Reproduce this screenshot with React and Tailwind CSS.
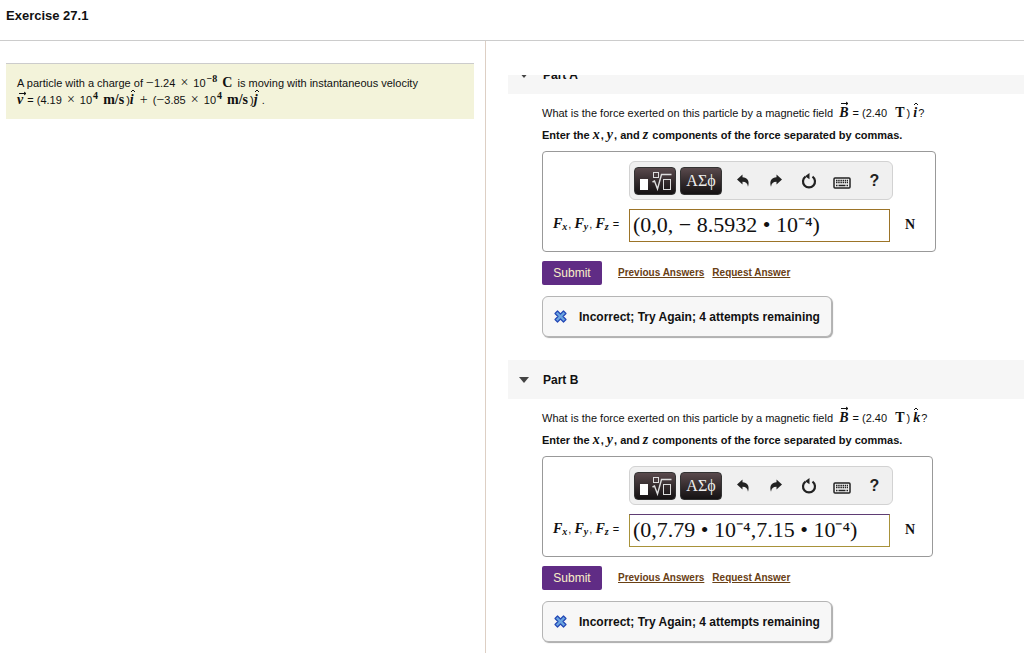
import React, { useState } from 'react';

const parts = [
  {
    id: 'a',
    title: 'Part A',
    unit: 'i',
    answer: '(0,0, − 8.5932 • 10⁻⁴)',
    boxClass: 'w-[394px]',
    inputClass: 'border-[#9c7428]',
  },
  {
    id: 'b',
    title: 'Part B',
    unit: 'k',
    answer: '(0,7.79 • 10⁻⁴,7.15 • 10⁻⁴)',
    boxClass: 'w-[391px]',
    inputClass: 'border-[#a8923a] border-t-[#5f3d74]',
  },
];

function Var({ children }) {
  return <i className="mr-px font-['Liberation_Serif',serif] text-sm leading-none font-bold">{children}</i>;
}

function Upright({ children }) {
  return <span className="mx-0.5 font-['Liberation_Serif',serif] text-sm leading-none font-bold">{children}</span>;
}

function Op({ children }) {
  return <span className="mx-0.5 font-['Liberation_Serif',serif] text-sm leading-none">{children}</span>;
}

function Minus() {
  return <span className="font-['Liberation_Serif',serif] text-sm leading-none">−</span>;
}

function Vec({ children }) {
  return (
    <span className="relative inline-block leading-none">
      <svg className={`absolute left-0.5 ${children === 'v' ? '-top-0.5' : '-top-[5px]'}`} width="8" height="5" viewBox="0 0 8 5" fill="none" stroke="#111">
        <path d="M0 2.500h7M5 1l2 1.500-2 1.500" />
      </svg>
      <Var>{children}</Var>
    </span>
  );
}

function Hat({ children }) {
  return (
    <span className="relative inline-block leading-none">
      <svg className="absolute -top-1 left-0" width="6" height="4" viewBox="0 0 6 4" fill="none" stroke="#111">
        <path d="M1 3l2-2 2 2" />
      </svg>
      <Var>{children}</Var>
    </span>
  );
}

function Sup({ children }) {
  return <sup className="ml-px font-['Liberation_Serif',serif] text-[10px] leading-none font-bold">{children}</sup>;
}

function Sub({ children }) {
  return <sub className="text-[10px] leading-none">{children}</sub>;
}

function RootIcon() {
  return (
    <svg width="34" height="22" viewBox="0 0 34 22" fill="none" stroke="#ddd" strokeWidth="1">
      <rect x="2" y="9" width="8" height="11" fill="#fff" stroke="none" />
      <rect x="15.500" y="2.500" width="5" height="5" />
      <path d="M14.500 12l2-1 3 8 4-14.500h10" strokeWidth="1.400" />
      <rect x="25.500" y="9.500" width="7" height="10" />
    </svg>
  );
}

function UndoIcon() {
  return (
    <svg width="14" height="14" viewBox="0 0 14 14" fill="#222">
      <path d="M1 5.500L6.500 0.500V3.200C11 3.400 14 6.500 12 12.800C11.500 9.500 10 7.900 6.500 7.800V10.500Z" />
    </svg>
  );
}

function RedoIcon() {
  return (
    <svg width="14" height="14" viewBox="0 0 14 14" fill="#222">
      <path d="M13 5.500L7.500 0.500V3.200C3 3.400 0 6.500 2 12.800C2.500 9.500 4 7.900 7.500 7.800V10.500Z" />
    </svg>
  );
}

function ResetIcon() {
  return (
    <svg width="16" height="16" viewBox="0 0 16 16" fill="none">
      <path d="M4.500 3.600A6 6 0 1 0 11.500 3.600" stroke="#222" strokeWidth="2.200" />
      <path d="M4 3.300L8.500 0V6.200z" fill="#222" />
    </svg>
  );
}

function KeyboardIcon() {
  return (
    <svg className="mt-1" width="18" height="12" viewBox="0 0 18 12" fill="none" stroke="#222">
      <rect x="1" y="1" width="16" height="10" rx="1" strokeWidth="1.500" />
      <path d="M3 3.500h12M3 5.500h12" strokeWidth="1.500" strokeDasharray="1.500 0.700" />
      <path d="M3 8.500h1.500M5.500 8.500h7M13.500 8.500H15" strokeWidth="1.500" />
    </svg>
  );
}

function WrongIcon() {
  return (
    <svg width="13" height="13" viewBox="0 0 13 13">
      <path
        d="M3.500 1L6.500 4L9.500 1L12 3.500L9 6.500L12 9.500L9.500 12L6.500 9L3.500 12L1 9.500L4 6.500L1 3.500Z"
        fill="#6ba5e0"
        stroke="#2347b5"
        strokeWidth="1.200"
        strokeLinejoin="round"
      />
    </svg>
  );
}

function Toolbar() {
  const dark = 'flex h-7 w-[42px] shrink-0 items-center justify-center rounded border border-[#333] bg-linear-to-b from-[#5a4a4d] to-[#151213] text-[#eee]';
  const plain = 'flex h-7 w-[33px] items-center justify-center text-[#222]';

  return (
    <div className="flex h-[39px] items-center rounded-md border border-[#d2d2d2] bg-[#f0f0f0] pl-1">
      <button className={dark} aria-label="Templates"><RootIcon /></button>
      <button className={`${dark} mx-1 font-['Liberation_Serif',serif] text-base`}>ΑΣϕ</button>
      <button className={plain} aria-label="Undo"><UndoIcon /></button>
      <button className={plain} aria-label="Redo"><RedoIcon /></button>
      <button className={plain} aria-label="Reset"><ResetIcon /></button>
      <button className={plain} aria-label="Keyboard"><KeyboardIcon /></button>
      <button className={`${plain} text-base font-bold`}>?</button>
    </div>
  );
}

function Part({ part }) {
  const [answer, setAnswer] = useState(part.answer);

  return (
    <section className="mb-[23px]">
      <h2 className="flex h-[39px] items-center bg-[#f6f6f6] text-xs font-bold">
        <button className="flex items-center gap-[14px] pl-[11px]">
          <svg width="10" height="6" viewBox="0 0 10 6"><path d="M0 0h10L5 6z" fill="#444" /></svg>
          {part.title}
        </button>
      </h2>

      <div className="pt-2 pl-[34px]">
        <p className="leading-[22px] whitespace-nowrap">
          What is the force exerted on this particle by a magnetic field&nbsp; <Vec>B</Vec> = (2.40&nbsp; <Upright>T</Upright>)&nbsp;
          <Hat>{part.unit}</Hat>?
        </p>
        <p className="leading-[22px] font-bold whitespace-nowrap">
          Enter the <Var>x</Var>, <Var>y</Var>, and <Var>z</Var> components of the force separated by commas.
        </p>

        <div className={`mt-[5px] grid h-[101px] grid-cols-[76px_264px_auto] content-start items-center gap-y-[9px] rounded border border-[#999] pt-[9px] pl-[10px] ${part.boxClass}`}>
          <div className="col-start-2">
            <Toolbar />
          </div>
          <label htmlFor={`answer-${part.id}`} className="col-start-1 pb-1 leading-none whitespace-nowrap">
            <Var>F<Sub>x</Sub></Var>, <Var>F<Sub>y</Sub></Var>, <Var>F<Sub>z</Sub></Var> =
          </label>
          <input
            id={`answer-${part.id}`}
            value={answer}
            onChange={(e) => setAnswer(e.target.value)}
            className={`h-[33px] w-[261px] border bg-white px-[3px] pb-0.5 font-['Liberation_Serif',serif] text-[22px] outline-none ${part.inputClass}`}
          />
          <span className="pl-[10px]"><Upright>N</Upright></span>
        </div>

        <div className="mt-[9px] flex items-center">
          <button className="h-6 w-[60px] rounded-xs bg-[#602c85] text-xs text-[#f9efc8]">Submit</button>
          <a href="#previous" className="ml-4 pb-0.5 text-[10px] font-bold text-[#694014] underline">Previous Answers</a>
          <a href="#request" className="ml-2 pb-0.5 text-[10px] font-bold text-[#694014] underline">Request Answer</a>
        </div>

        <div className="mt-[11px] flex h-[41px] w-[290px] items-center gap-3 rounded-md border border-[#b5b5b5] bg-[#f7f7f7] pl-[11px] text-xs font-bold whitespace-nowrap shadow-[1px_1px_1px_#aaa]">
          <WrongIcon />
          Incorrect; Try Again; 4 attempts remaining
        </div>
      </div>
    </section>
  );
}

export default function App() {
  return (
    <div className="flex h-screen flex-col overflow-hidden bg-white font-['Liberation_Sans',Arial,sans-serif] text-[11px] text-[#111]">
      <header className="flex h-[41px] shrink-0 items-center border-b border-[#ccc] px-[6px] pb-2">
        <h1 className="text-[13px] font-bold">Exercise 27.1</h1>
      </header>

      <main className="flex min-h-0 flex-1">
        <div className="w-[486px] shrink-0 border-r border-[#ddcfc4] pt-[22px] pr-[11px] pl-[6px]">
          <div className="border-t border-[#ccc] bg-[#f3f3da] px-[11px] pt-[11px] pb-[10px] leading-[17px] whitespace-nowrap">
            <p>
              A particle with a charge of <Minus />1.24 <Op>×</Op> 10<Sup>−8</Sup> <Upright>C</Upright> is moving with instantaneous velocity
            </p>
            <p>
              <Vec>v</Vec> = (4.19 <Op>×</Op> 10<Sup>4</Sup> <Upright>m/s</Upright>)<Hat>i</Hat> <Op>+</Op> (<Minus />3.85 <Op>×</Op> 10<Sup>4</Sup> <Upright>m/s</Upright>)<Hat>j</Hat> .
            </p>
          </div>
        </div>

        <div className="mt-[34px] min-w-0 flex-1 overflow-hidden pl-[22px]">
          <div className="-mt-5">
            {parts.map((part) => (
              <Part key={part.id} part={part} />
            ))}
          </div>
        </div>
      </main>
    </div>
  );
}
